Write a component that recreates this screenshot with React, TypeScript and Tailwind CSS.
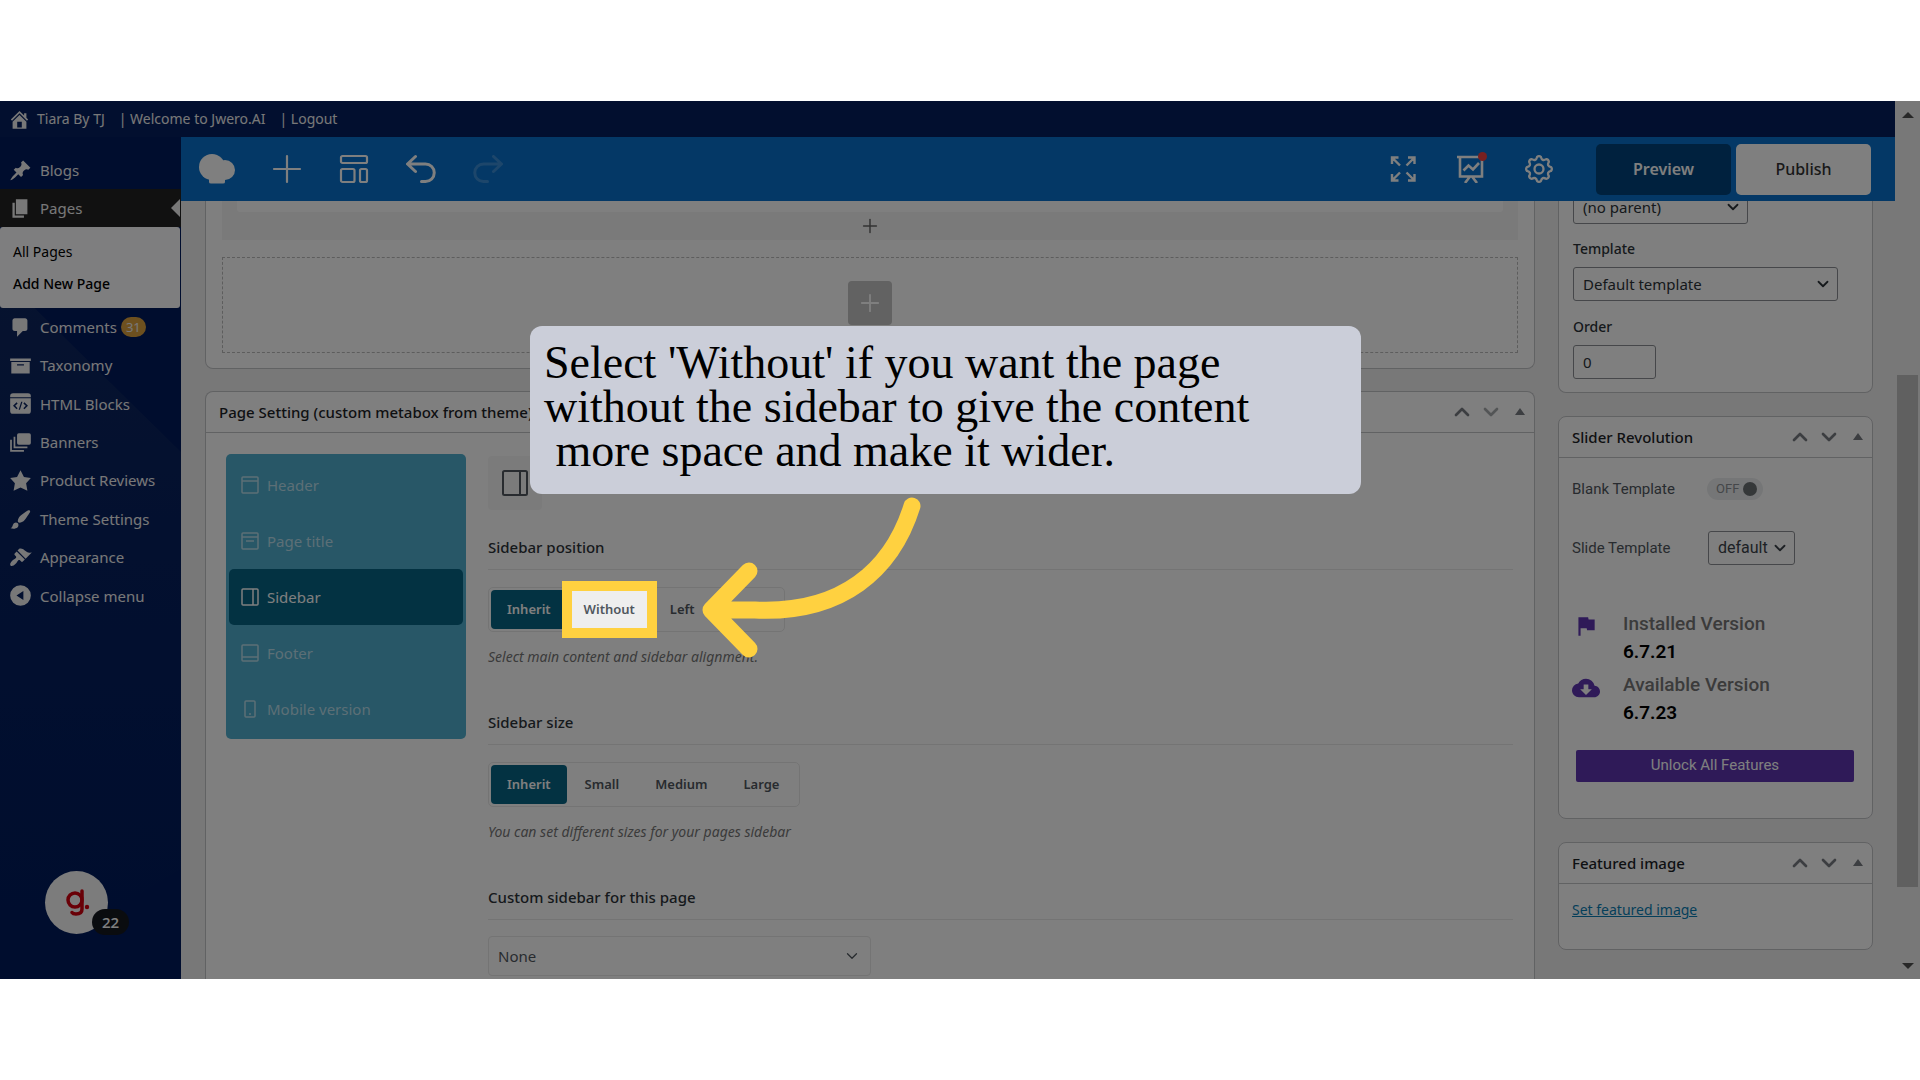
import React from "react";
import { ChevronDown, ChevronUp, Plus } from "lucide-react";
import { MdCloudDownload, MdFlag } from "react-icons/md";

const dash = {
  home: "M16 8.5l1.53 1.53-1.06 1.06L10 4.6l-6.47 6.49-1.06-1.06L10 2.5l4 4v-2h2v4zm-6-2.46l6 5.99V18H4v-5.97zM12 17v-5H8v5h4z",
  pin: "M10.44 3.02l1.82-1.82 6.36 6.35-1.83 1.82c-1.05-.68-2.48-.57-3.41.36l-.75.75c-.92.93-1.04 2.35-.35 3.41l-1.83 1.82-2.41-2.41-2.8 2.79c-.42.42-3.38 2.71-3.8 2.29s1.86-3.39 2.28-3.81l2.79-2.79L4.1 9.36l1.83-1.82c1.05.69 2.48.57 3.4-.36l.75-.75c.93-.92 1.05-2.35.36-3.41z",
  page: "M6 15V2h10v13H6zm-1 1h8v2H3V5h2v11z",
  comment: "M5 2h9c1.1 0 2 .9 2 2v7c0 1.1-.9 2-2 2h-2l-5 5v-5H5c-1.1 0-2-.9-2-2V4c0-1.1.9-2 2-2z",
  archive: "M19 4v2H1V4h18zM2 7h16v10H2V7zm11 3V9H7v1h6z",
  star: "M10 1l3 6 6 .75-4.12 4.62L16 19l-6-3-6 3 1.13-6.63L1 7.75 7 7z",
  brush: "M18.33 3.57s.27-.8-.31-1.36c-.53-.52-1.22-.24-1.22-.24-.61.3-5.76 3.47-7.67 5.57-.86.96-2.06 3.79-1.09 4.82.92.98 3.96-.17 4.79-1 2.06-2.06 5.21-7.17 5.5-7.79zM1.4 17.65c2.37-1.56 1.46-3.41 3.23-4.64.93-.65 2.22-.62 3.08.29.63.67.8 2.57-.16 3.46-1.57 1.45-4 1.55-6.15.89z",
  appearance:
    "M14.48 11.06L7.41 3.99l1.5-1.5c.5-.56 2.3-.47 3.51.32 1.21.8 1.43 1.28 2.91 2.1 1.18.64 2.45 1.26 4.45.85zm-.71.71L6.7 4.7 4.93 6.47c-.39.39-.39 1.02 0 1.41l1.06 1.06c.39.39.39 1.03 0 1.42-.6.6-1.43 1.11-2.21 1.69-.35.26-.7.53-1.01.84C1.43 14.23.4 16.08 1.4 17.07c.99 1 2.84-.03 4.18-1.36.31-.31.58-.66.85-1.02.57-.78 1.08-1.61 1.69-2.21.39-.39 1.02-.39 1.41 0l1.06 1.06c.39.39 1.02.39 1.41 0z",
  html: "M3.5 1h13Q19 1 19 3.500V4.500H1V3.500Q1 1 3.500 1zM1 5.500h18v11Q19 19 16.500 19h-13Q1 19 1 16.500zM6.600 9L3.500 12l3.100 3 .9-.9L5.400 12l2.100-2.100zM13.400 9l-.9.900L14.600 12l-2.100 2.100.9.900 3.100-3zM10.600 8.500L8.400 15.500h1.100l2.200-7z",
  banners: "M8.500 2h9Q19 2 19 3.500v7Q19 12 17.500 12h-9Q7 12 7 10.500v-7Q7 2 8.500 2zM4 5h1.500v8.500H16V15H4zM1 7.500h1.500v9H13V18H1z",
  collapse: "M10 1a9 9 0 1 0 0 18a9 9 0 0 0 0-18zM12.500 6v8L6.500 10z",
};

function Dash({ d }: { d: string }) {
  return (
    <svg viewBox="0 0 20 20" fill="currentColor" fillRule="evenodd" className="size-[23px] shrink-0" aria-hidden="true">
      <path d={d} />
    </svg>
  );
}

function MenuItem({ icon, label, badge }: { icon: string; label: string; badge?: string }) {
  return (
    <li className="flex">
      <a href="#" className="flex flex-1 items-center gap-2 pl-[9px] text-[15px] text-[#f0f0f1]">
        <Dash d={icon} />
        <span>{label}</span>
        {badge && (
          <span className="-ml-1 rounded-full bg-[#dba13f] px-[5px] text-[13px] leading-5 text-[#f0f0f1]">{badge}</span>
        )}
      </a>
    </li>
  );
}

const menu = [
  { icon: dash.comment, label: "Comments", badge: "31" },
  { icon: dash.archive, label: "Taxonomy" },
  { icon: dash.html, label: "HTML Blocks" },
  { icon: dash.banners, label: "Banners" },
  { icon: dash.star, label: "Product Reviews" },
  { icon: dash.brush, label: "Theme Settings" },
  { icon: dash.appearance, label: "Appearance" },
  { icon: dash.collapse, label: "Collapse menu" },
];

function SideMenu() {
  return (
    <nav className="relative flex w-[181px] shrink-0 flex-col bg-[#001a5c] pt-[14px]">
      <div className="absolute inset-0 bg-linear-to-b from-[#12295f] via-[#06205f] to-[#001a5c] [clip-path:polygon(0_137px,181px_315px,181px_732px,0_100%)]" />
      <ul className="relative grid grid-rows-[38px_38px]">
        <MenuItem icon={dash.pin} label="Blogs" />
        <li className="flex bg-[#222]">
          <a href="#" className="relative flex flex-1 items-center gap-2 pl-[9px] text-[15px] text-[#f0f0f1]">
            <Dash d={dash.page} />
            <span className="flex-1">Pages</span>
            <span className="mr-px h-0 w-0 border-y-[9px] border-r-[9px] border-y-transparent border-r-[#f0f0f1]" />
          </a>
        </li>
      </ul>
      <ul className="relative mr-px rounded-[3px] bg-[#fdfdfe] px-[13px] pb-2 pt-[9px] text-sm leading-8 text-black">
        <li><a href="#">All Pages</a></li>
        <li><a href="#" className="font-medium">Add New Page</a></li>
      </ul>
      <ul className="relative grid h-[307px] auto-rows-fr">
        {menu.map((m) => (
          <MenuItem key={m.label} {...m} />
        ))}
      </ul>
      <button className="absolute bottom-[45px] left-[45px] flex size-[63px] items-center justify-center rounded-full bg-[#f8f8f8]" aria-label="Open widget">
        <svg viewBox="0 0 63 63" className="size-full" fill="none" stroke="#d2000f" strokeWidth="3.500" aria-hidden="true">
          <circle cx="30" cy="29" r="7" />
          <path d="M37 20v18q0 5-6 5-3 0-4-1.500" strokeLinecap="round" />
          <circle cx="42" cy="36" r="2.200" fill="#d2000f" stroke="none" />
        </svg>
      </button>
      <span className="absolute bottom-11 left-[92px] rounded-full bg-[#15181f] px-[10px] font-['Open_Sans',sans-serif] text-[15px] font-semibold leading-[26px] text-white">22</span>
    </nav>
  );
}

function gearPath() {
  let d = "";
  const n = 8;
  for (let i = 0; i < n; i++) {
    const p = (a: number, r: number) => {
      const t = ((i + a) / n) * Math.PI * 2 - Math.PI / 2;
      return `${(14 + r * Math.cos(t)).toFixed(2)} ${(14 + r * Math.sin(t)).toFixed(2)}`;
    };
    d += `${i === 0 ? "M" : "L"}${p(-0.2, 12.2)}Q${p(0, 13.6)} ${p(0.2, 12.2)}Q${p(0.5, 8)} ${p(0.8, 12.2)}`;
  }
  return d + "Z";
}

function Toolbar() {
  return (
    <header className="relative flex h-16 shrink-0 items-center bg-[#0871cc] pl-[18px] pr-6 text-white">
      <button aria-label="Builder" className="mr-[37px]">
        <svg viewBox="0 0 36 30" className="h-[30px] w-9" fill="currentColor">
          <circle cx="13" cy="13" r="13" />
          <circle cx="26" cy="16" r="10" />
          <path d="M10 20h16v8q0 1.500-2 1.500H12q-2 0-2-1.500z" />
        </svg>
      </button>
      <div className="flex items-center gap-[37px]">
        <button aria-label="Add element">
          <svg viewBox="0 0 30 30" className="size-[30px]" fill="none" stroke="currentColor" strokeWidth="2.200" strokeLinecap="round">
            <path d="M15 2v26M2 15h26" />
          </svg>
        </button>
        <button aria-label="Layouts">
          <svg viewBox="0 0 30 30" className="size-[30px]" fill="none" stroke="currentColor" strokeWidth="2.200">
            <rect x="2" y="2" width="26" height="7" rx="1.500" />
            <rect x="2" y="15" width="13.500" height="13" rx="1.500" />
            <rect x="21" y="15" width="7" height="13" rx="1.500" />
          </svg>
        </button>
        <button aria-label="Undo">
          <svg viewBox="0 0 30 30" className="size-[30px]" fill="none" stroke="currentColor" strokeWidth="3" strokeLinecap="round" strokeLinejoin="round">
            <path d="M9.500 2.500L1.500 10l8 7.500M2 10h17.500a8.700 8.700 0 0 1 0 17.500H15.500" />
          </svg>
        </button>
        <button aria-label="Redo" className="opacity-20">
          <svg viewBox="0 0 30 30" className="size-[30px]" fill="none" stroke="currentColor" strokeWidth="3" strokeLinecap="round" strokeLinejoin="round">
            <path d="M20.500 2.500l8 7.500-8 7.500M28 10H10.500a8.700 8.700 0 0 0 0 17.500H14.500" />
          </svg>
        </button>
      </div>
      <div className="ml-auto flex items-center gap-10">
        <button aria-label="Full screen">
          <svg viewBox="0 0 28 28" className="size-7" fill="none" stroke="currentColor" strokeWidth="2.400">
            <path d="M3 9V2.500h6.500M3 2.500l8 8M19 2.500h6.500V9M25.500 2.500l-8 8M3 19v6.500h6.500M3 25.500l8-8M19 25.500h6.500V19M25.500 25.500l-8-8" />
          </svg>
        </button>
        <button aria-label="Analysis" className="relative">
          <svg viewBox="0 0 28 28" className="size-7" fill="none" stroke="currentColor" strokeWidth="2.600">
            <path d="M0 2h26M3 2v19.500h22V2M6.500 15.500l5-5 4.500 4 6-6.500M13 21.500L8 28M15 21.500L20 28" />
          </svg>
          <span className="absolute -right-0.5 -top-[3px] size-[9px] rounded-full bg-[#f04040]" />
        </button>
        <button aria-label="Settings">
          <svg viewBox="0 0 28 28" className="size-7" fill="none" stroke="currentColor" strokeWidth="2.300" strokeLinejoin="round">
            <path d={gearPath()} />
            <circle cx="14" cy="14" r="4.500" />
          </svg>
        </button>
      </div>
      <div className="ml-[43px] flex gap-[5px] text-base font-semibold">
        <button className="h-[51px] w-[135px] rounded-[5px] bg-[#00437c]">Preview</button>
        <button className="h-[51px] w-[135px] rounded-[5px] bg-white font-medium text-[#333]">Publish</button>
      </div>
    </header>
  );
}

function BoxHeader({ title, dimDown }: { title: string; dimDown?: boolean }) {
  return (
    <div className="flex h-[41px] items-center border-b border-[#c3c4c7] pl-[13px] pr-[9px]">
      <h2 className="flex-1 text-[15px] font-medium text-[#1d2327]">{title}</h2>
      <div className="flex items-center gap-[5px] pb-px text-[#787c82]">
        <button aria-label="Move up"><ChevronUp className="size-6" strokeWidth={2.7} /></button>
        <button aria-label="Move down" className={dimDown ? "text-[#a7aaad]" : ""}>
          <ChevronDown className="size-6" strokeWidth={2.7} />
        </button>
        <button aria-label="Toggle panel" className="ml-[7px] h-0 w-0 border-x-[5px] border-b-[7px] border-x-transparent border-b-[#787c82]" />
      </div>
    </div>
  );
}

function Select({ id, label, value, className, chevron, thin }: { id: string; label?: string; value: string; className: string; chevron: string; thin?: boolean }) {
  return (
    <div className={"relative flex items-center " + className}>
      <select id={id} aria-label={label} className="h-full w-full appearance-none bg-transparent pl-[9px] outline-none">
        <option>{value}</option>
      </select>
      <ChevronDown className={"pointer-events-none absolute size-[18px] " + chevron} strokeWidth={thin ? 1.7 : 2.4} />
    </div>
  );
}

function TabIcon({ kind }: { kind: string }) {
  const inner: Record<string, string> = {
    header: "M1 5h16",
    title: "M1 5h16M5 9h8",
    sidebar: "M12 1v16",
    footer: "M1 13h16",
  };
  return (
    <svg viewBox="0 0 18 18" className="size-[18px]" fill="none" stroke="currentColor" strokeWidth="1.500" aria-hidden="true">
      {kind === "mobile" ? (
        <path d="M5 1h8q1 0 1 1v14q0 1-1 1H5q-1 0-1-1V2q0-1 1-1zM8 14h2" />
      ) : (
        <path d={"M2 1h14q1 0 1 1v14q0 1-1 1H2q-1 0-1-1V2q0-1 1-1z" + inner[kind]} />
      )}
    </svg>
  );
}

const tabs = [
  { kind: "header", label: "Header" },
  { kind: "title", label: "Page title" },
  { kind: "sidebar", label: "Sidebar" },
  { kind: "footer", label: "Footer" },
  { kind: "mobile", label: "Mobile version" },
];

function Choice({ options, spotlight }: { options: string[]; spotlight?: string }) {
  return (
    <div className="mt-[17px] inline-flex h-[45px] items-center rounded-[5px] border border-[#e8e8e8] p-0.5 text-[13px] font-semibold text-[#50575e]">
      {options.map((o, i) => (
        <button
          key={o}
          className={
            i === 0
              ? "h-[39px] rounded-[4px] bg-[#066484] px-4 text-white"
              : o === spotlight
                ? "relative z-20 mx-[5px] h-[37px] bg-[#eee] px-3 outline-[10px] outline-[#ffd140]"
                : "h-[39px] px-[18px]"
          }
        >
          {o}
        </button>
      ))}
    </div>
  );
}

function Section({ title, help, children }: { title: string; help?: string; children: React.ReactNode }) {
  return (
    <section className={help ? "mb-[43px]" : ""}>
      <h3 className="border-b border-[#e8e8e8] pb-[11px] text-[15px] font-medium leading-[22px] text-[#2c3338]">{title}</h3>
      <div className="flex">{children}</div>
      {help && <p className="mt-[14px] text-sm italic leading-[22px] text-[#777]">{help}</p>}
    </section>
  );
}

function LeftColumn() {
  return (
    <div className="flex min-w-0 flex-1 flex-col gap-[22px]">
      <div className="h-[168px] rounded-b-[8px] border border-t-0 border-[#c3c4c7] bg-white px-4">
        <div className="bg-[#f4f4f4] px-[15px]">
          <div className="h-[11px] rounded-b-[3px] bg-white" />
          <div className="flex h-7 items-center justify-center text-[#666]">
            <Plus className="size-[22px]" strokeWidth={1.6} />
          </div>
        </div>
        <div className="mt-[17px] flex h-[96px] items-start justify-center border border-dashed border-[#bbb] pt-[23px]">
          <button aria-label="Add element" className="flex size-11 items-center justify-center rounded-[4px] bg-[#c4c4c4] text-white">
            <Plus className="size-7" strokeWidth={1.6} />
          </button>
        </div>
      </div>
      <div className="flex-1 rounded-t-[8px] border border-b-0 border-[#c3c4c7] bg-white">
        <BoxHeader title="Page Setting (custom metabox from theme)" dimDown />
        <div className="flex items-start gap-[22px] pl-5 pr-[21px] pt-[21px]">
          <nav className="w-60 shrink-0 rounded-[5px] bg-[#50aece] px-[3px] pb-0.5 pt-[3px]">
            {tabs.map((t) => (
              <a
                key={t.kind}
                href="#"
                className={
                  t.kind === "sidebar"
                    ? "flex h-14 items-center gap-2 rounded-[5px] bg-[#066484] pl-3 text-[15px] text-white"
                    : "flex h-14 items-center gap-2 pl-3 text-[15px] text-[#b9dfec]"
                }
              >
                <TabIcon kind={t.kind} />
                {t.label}
              </a>
            ))}
          </nav>
          <div className="min-w-0 flex-1 pt-0.5">
            <div className="mb-[26px] flex size-[54px] items-center justify-center rounded-[4px] bg-[#f6f6f6] text-[#50575e]">
              <svg viewBox="0 0 26 26" className="size-[26px]" fill="none" stroke="currentColor" strokeWidth="2">
                <rect x="1" y="1" width="24" height="24" rx="1.500" />
                <path d="M18 1v24" />
              </svg>
            </div>
            <Section title="Sidebar position" help="Select main content and sidebar alignment.">
              <Choice options={["Inherit", "Without", "Left", "Right"]} spotlight="Without" />
            </Section>
            <Section title="Sidebar size" help="You can set different sizes for your pages sidebar">
              <Choice options={["Inherit", "Small", "Medium", "Large"]} />
            </Section>
            <Section title="Custom sidebar for this page">
              <Select id="custom-sidebar" label="Custom sidebar for this page" value="None" className="mt-4 h-10 w-[383px] rounded-[4px] border border-[#e8e8e8] text-[15px] text-[#50575e]" chevron="right-[9px]" thin />
            </Section>
          </div>
        </div>
      </div>
    </div>
  );
}

function RightColumn() {
  return (
    <aside className="flex w-[315px] shrink-0 flex-col gap-[23px]">
      <div className="rounded-b-[8px] border border-t-0 border-[#c3c4c7] bg-white px-[14px] pb-[13px] text-[15px] text-[#2c3338]">
        <Select id="parent" label="Parent" value="(no parent)" className="-mt-[11px] h-[34px] w-[175px] rounded-[3px] border border-[#8c8f94]" chevron="right-[5px]" />
        <label htmlFor="template" className="mt-[13px] block text-sm font-medium leading-6">Template</label>
        <Select id="template" value="Default template" className="mt-[6px] h-[34px] w-[265px] rounded-[3px] border border-[#8c8f94]" chevron="right-[5px]" />
        <label htmlFor="order" className="mt-[14px] block text-sm font-medium leading-6">Order</label>
        <input id="order" defaultValue="0" className="mt-[6px] block h-[34px] w-[83px] rounded-[3px] border border-[#8c8f94] px-[9px]" />
      </div>
      <div className="rounded-[8px] border border-[#c3c4c7] bg-white font-[Roboto,sans-serif] text-[#50575e]">
        <div className="font-['Noto_Sans',sans-serif]"><BoxHeader title="Slider Revolution" /></div>
        <div className="pl-[13px] pr-[18px] pb-9 text-[15px]">
          <div className="mt-5 flex h-[22px] items-center">
            <span className="w-[135px]">Blank Template</span>
            <button role="switch" aria-checked="false" aria-label="Blank Template" className="flex h-[22px] w-14 items-center justify-between rounded-full bg-[#ebedee] pl-[9px] pr-[6px] text-[13px] text-[#8a8f94]">
              OFF <span className="size-[14px] rounded-full bg-[#6b7073]" />
            </button>
          </div>
          <div className="mt-[31px] flex items-center">
            <label htmlFor="slide-template" className="w-[136px]">Slide Template</label>
            <Select id="slide-template" value="default" className="h-[34px] w-[87px] rounded-[3px] border border-[#8c8f94] text-base text-[#3c434a]" chevron="right-[5px]" />
          </div>
          <div className="mt-[45px] grid grid-cols-[51px_1fr] text-[19px] font-medium leading-7 text-[#777]">
            <MdFlag className="mt-[3px] ml-px size-[26px] text-[#5e35b1]" />
            <dl><dt>Installed Version</dt><dd className="font-semibold text-black">6.7.21</dd></dl>
            <MdCloudDownload className="mt-2 size-7 text-[#5e35b1]" />
            <dl className="mt-[5px]"><dt>Available Version</dt><dd className="font-semibold text-black">6.7.23</dd></dl>
          </div>
          <button className="mt-[23px] ml-1 block h-8 w-[278px] rounded-[2px] bg-[#5e35b1] pb-0.5 text-[15px] text-white">Unlock All Features</button>
        </div>
      </div>
      <div className="h-[108px] rounded-[8px] border border-[#c3c4c7] bg-white">
        <BoxHeader title="Featured image" />
        <p className="pl-[13px] pt-[15px] text-sm leading-[22px]"><a href="#" className="text-[#0a7fb5] underline">Set featured image</a></p>
      </div>
    </aside>
  );
}

function ScrollBar() {
  return (
    <div className="flex w-[25px] shrink-0 flex-col items-center bg-[#f1f1f1] pb-[10px] pt-[11px]">
      <span className="h-0 w-0 border-x-[6px] border-b-[6px] border-x-transparent border-b-[#505050]" />
      <span className="mt-[257px] h-[512px] w-[21px] bg-[#c1c1c1]" />
      <span className="mt-auto h-0 w-0 border-x-[6px] border-t-[6px] border-x-transparent border-t-[#505050]" />
    </div>
  );
}

export default function App() {
  return (
    <div className="flex h-screen flex-col bg-white py-[101px] font-['Noto_Sans',sans-serif]">
      <div className="relative flex min-h-0 flex-1 overflow-hidden">
        <div className="flex min-w-0 flex-1 flex-col">
          <div className="flex h-9 shrink-0 items-center bg-[#041f5e] pl-2 text-sm text-[#f0f0f1]">
            <a href="#" className="flex items-center gap-[6px]"><Dash d={dash.home} />Tiara By TJ</a>
            <span className="ml-[14px]">| Welcome to Jwero.AI</span>
            <a href="#" className="ml-[14px]">| Logout</a>
          </div>
          <div className="flex min-h-0 flex-1">
            <SideMenu />
            <main className="flex min-w-0 flex-1 flex-col bg-[#f0f0f1]">
              <Toolbar />
              <div className="flex min-h-0 flex-1 gap-[23px] overflow-hidden pl-6 pr-[22px]">
                <LeftColumn />
                <RightColumn />
              </div>
            </main>
          </div>
        </div>
        <ScrollBar />
        <div className="pointer-events-none absolute inset-0 z-10 bg-black/50" />
        <div role="tooltip" className="absolute left-[530px] top-[225px] z-30 h-[168px] w-[831px] whitespace-pre rounded-[12px] bg-[#cbced9] pl-[14px] pt-[15px] font-['Liberation_Serif',serif] text-[46px] leading-[44px] text-black">
          {"Select 'Without' if you want the page\nwithout the sidebar to give the content\n more space and make it wider."}
        </div>
        <svg viewBox="0 0 230 170" className="pointer-events-none absolute left-[697px] top-[392px] z-30 h-[170px] w-[230px]" fill="none" stroke="#ffd140" strokeWidth="17" strokeLinecap="round" strokeLinejoin="round" aria-hidden="true">
          <path d="M215 13C195 77 145 121 58 117H14M52 78L14 117L52 156" />
        </svg>
      </div>
    </div>
  );
}
